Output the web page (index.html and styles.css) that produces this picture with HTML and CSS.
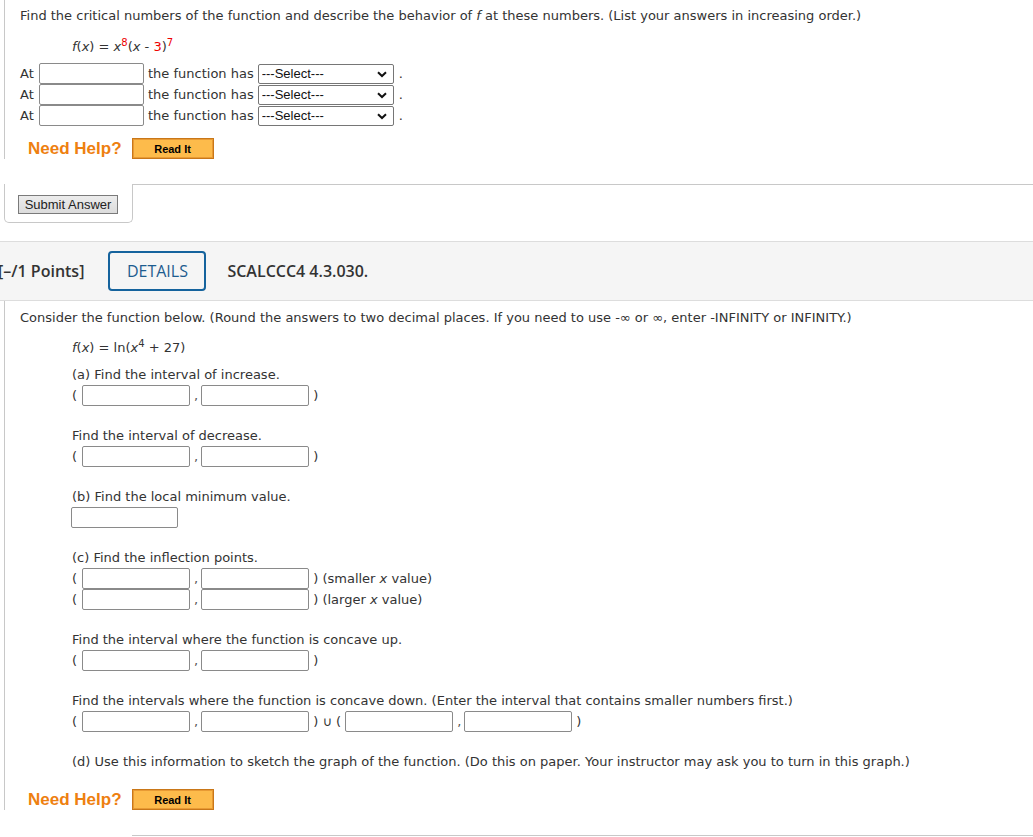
FILE: index.html
```html
<!DOCTYPE html>
<html lang="en">
<head>
<meta charset="utf-8">
<title>Question</title>
<link rel="stylesheet" href="styles.css">
</head>
<body>
<div class="panel">
  <div class="qbody">
    <p class="prompt">Find the critical numbers of the function and describe the behavior of <i>f</i> at these numbers. (List your answers in increasing order.)</p>
    <div class="fx"><i>f</i>(<i>x</i>) = <i>x</i><sup class="red">8</sup>(<i>x</i> - <span class="red">3</span>)<sup class="red">7</sup></div>
    <div class="crit-rows">
      <div class="crit-row">
        <span class="at">At</span><input class="box crit-box" type="text">
        <span class="has">the function has</span>
        <span class="sel-wrap"><select class="sel"><option>---Select---</option></select><svg class="chev" width="10" height="7" viewBox="0 0 10 7"><path d="M1 1.2 L5 5 L9 1.2" fill="none" stroke="#111" stroke-width="2"/></svg></span>
        <span class="dot">.</span>
      </div>
      <div class="crit-row">
        <span class="at">At</span><input class="box crit-box" type="text">
        <span class="has">the function has</span>
        <span class="sel-wrap"><select class="sel"><option>---Select---</option></select><svg class="chev" width="10" height="7" viewBox="0 0 10 7"><path d="M1 1.2 L5 5 L9 1.2" fill="none" stroke="#111" stroke-width="2"/></svg></span>
        <span class="dot">.</span>
      </div>
      <div class="crit-row">
        <span class="at">At</span><input class="box crit-box" type="text">
        <span class="has">the function has</span>
        <span class="sel-wrap"><select class="sel"><option>---Select---</option></select><svg class="chev" width="10" height="7" viewBox="0 0 10 7"><path d="M1 1.2 L5 5 L9 1.2" fill="none" stroke="#111" stroke-width="2"/></svg></span>
        <span class="dot">.</span>
      </div>
    </div>
    <div class="help">
      <span class="help-text">Need Help?</span>
      <button class="read-it" type="button">Read It</button>
    </div>
  </div>
  <div class="submit-row">
    <div class="submit-cell"><button class="submit-btn" type="button">Submit Answer</button></div>
    <div class="submit-fill"></div>
  </div>
</div>

<div class="band">
  <span class="points">[–/1 Points]</span>
  <span class="details">DETAILS</span>
  <span class="qid">SCALCCC4 4.3.030.</span>
</div>

<div class="panel panel-bottom">
  <div class="qbody qbody2">
    <p class="prompt">Consider the function below. (Round the answers to two decimal places. If you need to use -∞ or ∞, enter -INFINITY or INFINITY.)</p>
    <div class="fx fx2"><i>f</i>(<i>x</i>) = ln(<i>x</i><sup>4</sup> + 27)</div>
    <div class="parts">
      <div class="group">
        <div class="label">(a) Find the interval of increase.</div>
        <div class="irow"><span class="par">(</span><input class="box" type="text"><span class="comma">,</span><input class="box" type="text"><span class="par">)</span></div>
      </div>
      <div class="group">
        <div class="label">Find the interval of decrease.</div>
        <div class="irow"><span class="par">(</span><input class="box" type="text"><span class="comma">,</span><input class="box" type="text"><span class="par">)</span></div>
      </div>
      <div class="group">
        <div class="label">(b) Find the local minimum value.</div>
        <div class="irow"><input class="box solo" type="text"></div>
      </div>
      <div class="group">
        <div class="label">(c) Find the inflection points.</div>
        <div class="irow"><span class="par">(</span><input class="box" type="text"><span class="comma">,</span><input class="box" type="text"><span class="par">) (smaller <i>x</i> value)</span></div>
        <div class="irow"><span class="par">(</span><input class="box" type="text"><span class="comma">,</span><input class="box" type="text"><span class="par">) (larger <i>x</i> value)</span></div>
      </div>
      <div class="group">
        <div class="label">Find the interval where the function is concave up.</div>
        <div class="irow"><span class="par">(</span><input class="box" type="text"><span class="comma">,</span><input class="box" type="text"><span class="par">)</span></div>
      </div>
      <div class="group">
        <div class="label">Find the intervals where the function is concave down. (Enter the interval that contains smaller numbers first.)</div>
        <div class="irow"><span class="par">(</span><input class="box" type="text"><span class="comma">,</span><input class="box" type="text"><span class="par">) ∪ (</span><input class="box" type="text"><span class="comma">,</span><input class="box" type="text"><span class="par">)</span></div>
      </div>
      <div class="group last">
        <div class="label">(d) Use this information to sketch the graph of the function. (Do this on paper. Your instructor may ask you to turn in this graph.)</div>
      </div>
    </div>
    <div class="help">
      <span class="help-text">Need Help?</span>
      <button class="read-it" type="button">Read It</button>
    </div>
  </div>
  <div class="submit-row">
    <div class="submit-fill submit-fill-bottom"></div>
  </div>
</div>
</body>
</html>
```
FILE: styles.css
```css
html, body {
  margin: 0;
  padding: 0;
  background: #fff;
}
body {
  font-family: "DejaVu Sans", Verdana, sans-serif;
  font-size: 13px;
  color: #333;
}
.panel {
  margin-left: 4px;
}
.qbody {
  border-left: 1px solid #c8c8c8;
  padding: 8px 0 0 15px;
}
.prompt {
  margin: 0;
  line-height: 16px;
}
.fx {
  margin-top: 13px;
  padding-left: 52px;
  line-height: 20px;
}
.fx sup {
  font-size: 10px;
  line-height: 0;
  vertical-align: 5px;
}
.red {
  color: #e00;
}
.crit-rows {
  margin-top: 6px;
}
.crit-row {
  display: flex;
  align-items: center;
  height: 21px;
}
.at {
  width: 19px;
}
.box {
  box-sizing: border-box;
  width: 108px;
  height: 21px;
  border: 1px solid #8a8a8a;
  border-radius: 2px;
  margin: 0;
  padding: 0 3px;
  background: #fff;
  font: inherit;
}
.crit-box {
  width: 105px;
}
.has {
  margin-left: 4px;
  margin-right: 4px;
}
.sel-wrap {
  position: relative;
  display: inline-flex;
}
.sel {
  appearance: none;
  -webkit-appearance: none;
  box-sizing: border-box;
  width: 136px;
  height: 20px;
  border: 1px solid #767676;
  border-radius: 2px;
  background: #fff;
  margin: 0;
  padding: 0 0 0 3px;
  font-family: "Liberation Sans", Arial, sans-serif;
  font-size: 13px;
  color: #111;
}
.chev {
  position: absolute;
  right: 7px;
  top: 7px;
  pointer-events: none;
}
.dot {
  margin-left: 5px;
}
.help {
  display: flex;
  align-items: center;
  height: 21px;
  margin-top: 12px;
  padding-left: 8px;
}
.help-text {
  font-family: "Liberation Sans", Arial, sans-serif;
  font-weight: bold;
  font-size: 17px;
  color: #ee8010;
}
.read-it {
  box-sizing: border-box;
  width: 82px;
  height: 21px;
  margin-left: 10px;
  padding: 0;
  border: 1px solid #c97718;
  box-shadow: inset 0 0 0 1px #e89a34;
  background: #fdbb4b;
  font-family: "Liberation Sans", Arial, sans-serif;
  font-weight: bold;
  font-size: 11px;
  color: #000;
}
.submit-row {
  display: flex;
  align-items: flex-start;
  margin-top: 25px;
}
.submit-cell {
  box-sizing: border-box;
  width: 129px;
  height: 39px;
  border-left: 1px solid #c8c8c8;
  border-right: 1px solid #c8c8c8;
  border-bottom: 1px solid #c8c8c8;
  border-radius: 0 0 5px 5px;
  padding: 11px 0 0 13px;
}
.submit-btn {
  box-sizing: border-box;
  width: 100px;
  height: 19px;
  margin: 0;
  padding: 0;
  border: 1px solid #7a7a7a;
  background: linear-gradient(#ececec, #dcdcdc);
  font-family: "Liberation Sans", Arial, sans-serif;
  font-size: 13px;
  color: #222;
}
.submit-fill {
  flex: 1;
  border-top: 1px solid #c8c8c8;
}
.submit-fill-bottom {
  margin-left: 128px;
}
.band {
  display: flex;
  align-items: center;
  margin-top: 18px;
  height: 58px;
  background: #f5f5f5;
  border-top: 1px solid #ddd;
  border-bottom: 1px solid #ddd;
  font-family: "Open Sans", sans-serif;
  font-size: 16px;
  color: #333;
}
.points {
  font-weight: 600;
  margin-left: -2px;
}
.details {
  box-sizing: border-box;
  height: 40px;
  width: 98px;
  margin-left: 24px;
  border: 2px solid #15639d;
  border-radius: 4px;
  display: flex;
  align-items: center;
  justify-content: center;
  color: #1d5c8f;
}
.qid {
  font-weight: 600;
  margin-left: 21px;
}
.panel-bottom .qbody2 {
  padding-top: 9px;
}
.fx2 {
  margin-top: 12px;
}
.parts {
  margin-top: 7px;
  padding-left: 52px;
}
.group {
  margin-bottom: 20px;
}
.group.last {
  margin-bottom: 0;
}
.label {
  line-height: 20px;
}
.irow {
  display: flex;
  align-items: center;
  height: 21px;
}
.par {
  margin: 0 4px 0 4px;
}
.irow .par:first-child {
  margin-left: 0;
  margin-right: 5px;
}
.comma {
  margin: 0 3px 0 4px;
  color: #555;
}
.solo {
  width: 107px;
  margin-left: -1px;
}
.panel-bottom .help {
  margin-top: 17px;
}
```
